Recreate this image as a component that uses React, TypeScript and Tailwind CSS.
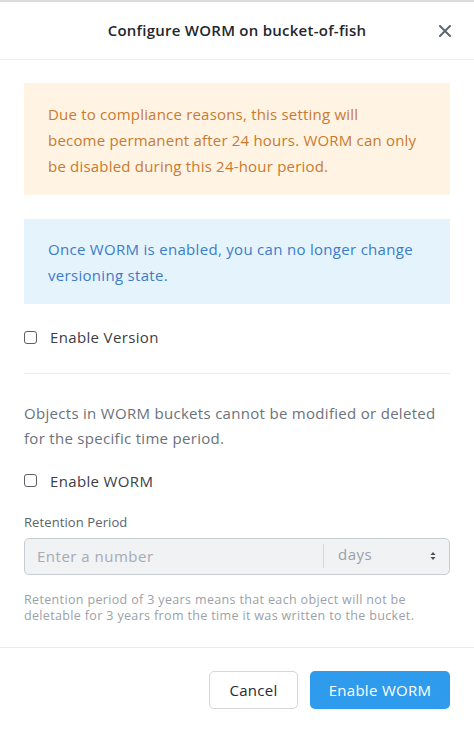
import React from "react";

function Check({ label }: { label: string }) {
  return (
    <label className="flex items-center gap-[13px]">
      <span className="block w-[13px] h-[13px] rounded-[3px] border border-[#5a5f66] bg-white" />
      <span className="text-[15px] text-[#3b4047] tracking-[0.35px]">{label}</span>
    </label>
  );
}

export default function App() {
  return (
    <div
      className="w-[474px] h-[731px] bg-white flex flex-col border-t-2 border-[#dcdcdc]"
      style={{ fontFamily: '"Open Sans", "Liberation Sans", sans-serif' }}
    >
      <div className="h-[58px] flex items-center relative border-b border-[#ececec] shrink-0">
        <div className="w-full text-center text-[15px] font-semibold text-[#22272e] tracking-[0.25px]">
          Configure WORM on bucket-of-fish
        </div>
        <svg
          className="absolute right-[23px] top-[23px]"
          width="12"
          height="12"
          viewBox="0 0 12 12"
        >
          <path d="M1 1 L11 11 M11 1 L1 11" stroke="#5e6670" strokeWidth="2" strokeLinecap="round" />
        </svg>
      </div>
      <div className="flex-1 px-6 pt-[23px]">
        <div className="bg-[#fff4e3] px-6 pt-[18px] pb-[16px] text-[15px] leading-[26px] text-[#c97a2f] tracking-[0.2px] whitespace-nowrap">
          Due to compliance reasons, this setting will
          <br />
          become permanent after 24 hours. WORM can only
          <br />
          be disabled during this 24-hour period.
        </div>
        <div className="mt-6 bg-[#e5f3fd] px-6 pt-[17px] pb-[16px] text-[15px] leading-[26px] text-[#3c7cc7] tracking-[0.3px]">
          Once WORM is enabled, you can no longer change versioning state.
        </div>
        <div className="mt-[22px]">
          <Check label="Enable Version" />
        </div>
        <div className="mt-[24px] border-t border-[#ececec]" />
        <p className="mt-[27px] text-[15px] leading-[25px] text-[#6b727b] tracking-[0.3px]">
          Objects in WORM buckets cannot be modified or deleted for the specific time period.
        </p>
        <div className="mt-[19px]">
          <Check label="Enable WORM" />
        </div>
        <div className="mt-[21px] text-[13px] text-[#5b626b] tracking-[0.1px]">Retention Period</div>
        <div className="mt-[5px] h-[37px] flex items-center rounded-[5px] border border-[#c9cdd3] bg-[#f0f2f4]">
          <div className="flex-1 pl-[12px] text-[15px] text-[#a5abb2] tracking-[0.5px]">Enter a number</div>
          <div className="w-px h-[24px] bg-[#d4d8dc]" />
          <div className="w-[125px] flex items-center justify-between pl-[14px] pr-[13px] text-[15px] text-[#9aa0a8] tracking-[0.5px] -mt-[3px]">
            <span>days</span>
            <svg width="6" height="10" viewBox="0 0 6 10" className="mt-[3px]">
              <path d="M0.5 4 L3 1 L5.5 4 Z M0.5 6 L3 9 L5.5 6 Z" fill="#4a5058" />
            </svg>
          </div>
        </div>
        <p className="mt-[17px] text-[12.5px] leading-[16px] text-[#9ba1a9] tracking-[0.35px]">
          Retention period of 3 years means that each object will not be deletable for 3 years from the time it was written to the bucket.
        </p>
      </div>
      <div className="h-[84px] shrink-0 border-t border-[#ececec] flex items-start justify-end gap-[12px] px-6 pt-[23px]">
        <button className="w-[89px] h-[38px] rounded-[5px] border border-[#d4d8dc] bg-white text-[15px] text-[#262b31] tracking-[0.3px]">
          Cancel
        </button>
        <button className="w-[140px] h-[38px] rounded-[5px] bg-[#2e9bec] text-[15px] text-white tracking-[0.3px]">
          Enable WORM
        </button>
      </div>
    </div>
  );
}
